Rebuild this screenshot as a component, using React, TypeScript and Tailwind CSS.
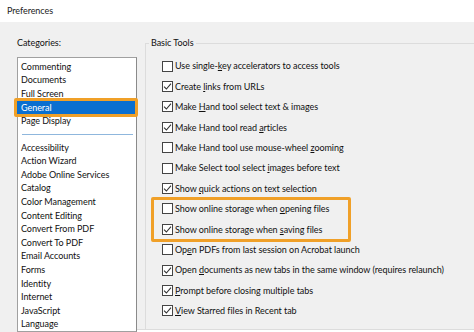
const categoriesTop = ['Commenting', 'Documents', 'Full Screen', 'General', 'Page Display']
const categoriesBottom = [
  'Accessibility',
  'Action Wizard',
  'Adobe Online Services',
  'Catalog',
  'Color Management',
  'Content Editing',
  'Convert From PDF',
  'Convert To PDF',
  'Email Accounts',
  'Forms',
  'Identity',
  'Internet',
  'JavaScript',
  'Language',
]

// [before, underlined letter, after, checked]
const options: [string, string, string, boolean][] = [
  ['Use single-', 'k', 'ey accelerators to access tools', false],
  ['Create ', 'l', 'inks from URLs', true],
  ['Make ', 'H', 'and tool select text & images', true],
  ['Make Hand tool read ', 'a', 'rticles', true],
  ['Make Hand tool use mouse-wheel ', 'z', 'ooming', false],
  ['Make Select tool select ', 'i', 'mages before text', false],
  ['Show ', 'q', 'uick actions on text selection', true],
  ['Show online storage when ', 'o', 'pening files', false],
  ['Show online storage when ', 's', 'aving files', true],
  ['Op', 'e', 'n PDFs from last session on Acrobat launch', false],
  ['Open ', 'd', 'ocuments as new tabs in the same window (requires relaunch)', true],
  ['', 'P', 'rompt before closing multiple tabs', true],
  ['', 'V', 'iew Starred files in Recent tab', true],
]

function Checkbox({ checked }: { checked: boolean }) {
  return (
    <span className="flex h-[11px] w-[11px] shrink-0 items-center justify-center border border-[#444] bg-white">
      {checked && (
        <svg width="9" height="9" viewBox="0 0 9 9">
          <path d="M1 4.6 L3.4 7 L8 1.6" fill="none" stroke="#333" strokeWidth="1.1" />
        </svg>
      )}
    </span>
  )
}

function OptionRow({ opt }: { opt: [string, string, string, boolean] }) {
  const [before, key, after, checked] = opt
  return (
    <div className="flex h-[20.4px] items-center gap-[2px] whitespace-nowrap">
      <Checkbox checked={checked} />
      <span>
        {before}
        <span className="underline underline-offset-1">{key}</span>
        {after}
      </span>
    </div>
  )
}

export default function App() {
  return (
    <div
      className="flex h-[332px] w-[474px] flex-col overflow-hidden bg-[#f0f0f0] text-[9px] tracking-[-0.05px] text-[#111]"
      style={{ fontFamily: 'Lato, "Open Sans", Arial, sans-serif' }}
    >
      {/* Title bar */}
      <div className="flex h-[22px] shrink-0 items-center bg-white pl-[7px] text-[9px] text-[#222]">
        Preferences
      </div>

      <div className="flex min-h-0 flex-1">
        {/* Categories */}
        <div className="flex w-[137px] shrink-0 flex-col pl-[17px] pt-[13px]">
          <div className="h-[23px] leading-[15px]">Categories:</div>
          <div className="relative flex-1 border border-r-[#8a8a8a] border-[#a0a0a0] bg-white pt-[2px] pl-[1px]">
            {categoriesTop.map((c) =>
              c === 'General' ? (
                <div key={c} className="relative h-[13.6px] leading-[13.6px]">
                  <div className="absolute -top-[3px] -bottom-[3px] -left-[5px] right-[-2px] rounded-[2px] border-[3px] border-[#f0a028] bg-[#0a6fd0]" />
                  <span className="relative pl-[2px] text-white">{c}</span>
                </div>
              ) : (
                <div key={c} className="h-[13.6px] pl-[2px] leading-[13.6px]">
                  {c}
                </div>
              ),
            )}
            <div className="mx-[3px] my-[6px] h-px bg-[#8fb7dd]" />
            {categoriesBottom.map((c) => (
              <div key={c} className="h-[13.6px] pl-[2px] leading-[13.6px]">
                {c}
              </div>
            ))}
          </div>
        </div>

        {/* Basic Tools group */}
        <div className="flex flex-1 flex-col">
          <div className="flex-1 border-b border-[#dcdcdc] pl-[8px] pt-[15px]">
            <fieldset className="relative h-[292px] border border-b-0 border-r-0 border-[#dcdcdc]">
              <legend className="ml-[3px] px-[2px] leading-[12px]">Basic Tools</legend>
              <div className="pl-[16px] pt-[7px]">
                {options.map((o, i) => (
                  <OptionRow key={i} opt={o} />
                ))}
              </div>
              <div className="pointer-events-none absolute left-[5px] top-[148px] h-[45px] w-[200px] rounded-[2px] border-[3px] border-[#f0a028]" />
            </fieldset>
          </div>
          <div className="h-[2px] bg-white" />
        </div>
      </div>
    </div>
  )
}
